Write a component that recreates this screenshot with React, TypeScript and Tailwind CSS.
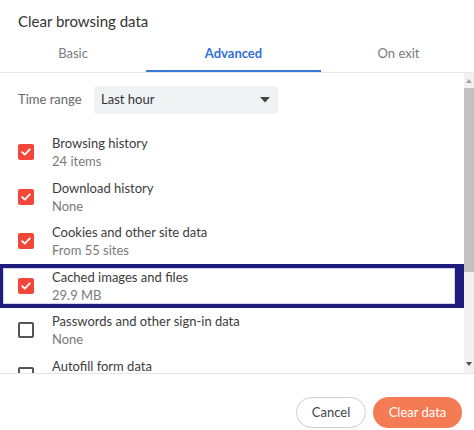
interface DataItem {
  title: string;
  detail: string;
  checked: boolean;
  focused?: boolean;
}

const items: DataItem[] = [
  { title: "Browsing history", detail: "24 items", checked: true },
  { title: "Download history", detail: "None", checked: true },
  { title: "Cookies and other site data", detail: "From 55 sites", checked: true },
  { title: "Cached images and files", detail: "29.9 MB", checked: true, focused: true },
  { title: "Passwords and other sign-in data", detail: "None", checked: false },
  { title: "Autofill form data", detail: "", checked: false },
];

function CheckBox({ checked }: { checked: boolean }) {
  if (checked) {
    return (
      <div className="w-[16px] h-[16px] rounded-[2px] bg-[#f2463b] flex items-center justify-center shrink-0">
        <svg width="10" height="8" viewBox="0 0 10 8" fill="none">
          <path d="M1.2 4.2 L3.8 6.6 L8.8 1.4" stroke="white" strokeWidth="1.8" strokeLinecap="round" strokeLinejoin="round" />
        </svg>
      </div>
    );
  }
  return <div className="w-[16px] h-[16px] rounded-[2px] border-2 border-[#555] shrink-0" />;
}

function App() {
  return (
    <div className="w-[474px] h-[430px] bg-white flex flex-col overflow-hidden font-['Lato',_'Noto_Sans',_sans-serif] text-[#3c3c3c]">
      <div className="h-[37px] pl-[18px] pt-[10px] text-[15px] leading-[22px] text-[#333]">Clear browsing data</div>

      <div className="h-[36px] flex border-b border-[#e6e6e6] text-[13px]">
        <div className="w-[146px] flex items-center justify-center text-[#7a7a7a] pb-[2px]">Basic</div>
        <div className="w-[175px] flex items-center justify-center font-bold text-[#2f6fd6] border-b-[2px] border-[#3b78d8]">
          Advanced
        </div>
        <div className="flex-1 flex items-center justify-center text-[#7a7a7a] pb-[2px] pl-[2px]">On exit</div>
      </div>

      <div className="h-[300px] flex">
        <div className="flex-1 overflow-hidden">
          <div className="flex items-center pt-[13px] pl-[18px]">
            <span className="w-[76px] text-[13px] text-[#666]">Time range</span>
            <div className="w-[184px] h-[28px] rounded-[3px] bg-[#f1f2f4] flex items-center justify-between pl-[7px] pr-[8px] text-[13px] text-[#333]">
              <span>Last hour</span>
              <svg width="10" height="6" viewBox="0 0 10 6">
                <path d="M0 0 L10 0 L5 5.5 Z" fill="#444" />
              </svg>
            </div>
          </div>

          <div className="mt-[16px] flex flex-col">
            {items.map((item) => (
              <div key={item.title} className="relative h-[44.6px] shrink-0 pt-[4px] flex items-start">
                <div className="h-[36px] w-[52px] pl-[18px] flex items-center">
                  <CheckBox checked={item.checked} />
                </div>
                <div className="flex flex-col text-[13px] leading-[18px]">
                  <span className="text-[#3c3c3c]">{item.title}</span>
                  <span className="text-[#7a7a7a]">{item.detail}</span>
                </div>
                {item.focused && (
                  <div className="absolute left-0 top-0 w-[465px] h-[44px] border-l-[3px] border-t-[4px] border-r-[10px] border-b-[4px] border-[#1e1c7c] pointer-events-none">
                    <div className="w-full h-full border border-[#d3d3f2]" />
                  </div>
                )}
              </div>
            ))}
          </div>
        </div>

        {/* fake scrollbar */}
        <div className="w-[10px] bg-[#f1f1f1] flex flex-col items-center">
          <div className="h-[15px] flex items-center justify-center">
            <svg width="6" height="4" viewBox="0 0 6 4">
              <path d="M0 4 L6 4 L3 0 Z" fill="#a3a3a3" />
            </svg>
          </div>
          <div className="w-full h-[184px] bg-[#c1c1c1]" />
          <div className="flex-1" />
          <div className="h-[18px] flex items-center justify-center">
            <svg width="6" height="4" viewBox="0 0 6 4">
              <path d="M0 0 L6 0 L3 4 Z" fill="#505050" />
            </svg>
          </div>
        </div>
      </div>

      <div className="flex-1 border-t border-[#e6e6e6] flex justify-end items-start gap-[7px] pt-[23px] pr-[12px]">
        <button
          type="button"
          className="w-[70px] h-[31px] rounded-full border border-[#cfcfcf] text-[13px] text-[#444] bg-white"
        >
          Cancel
        </button>
        <button
          type="button"
          className="w-[89px] h-[31px] rounded-full bg-[#f57b55] text-[13px] text-white"
        >
          Clear data
        </button>
      </div>
    </div>
  );
}

export default App;
